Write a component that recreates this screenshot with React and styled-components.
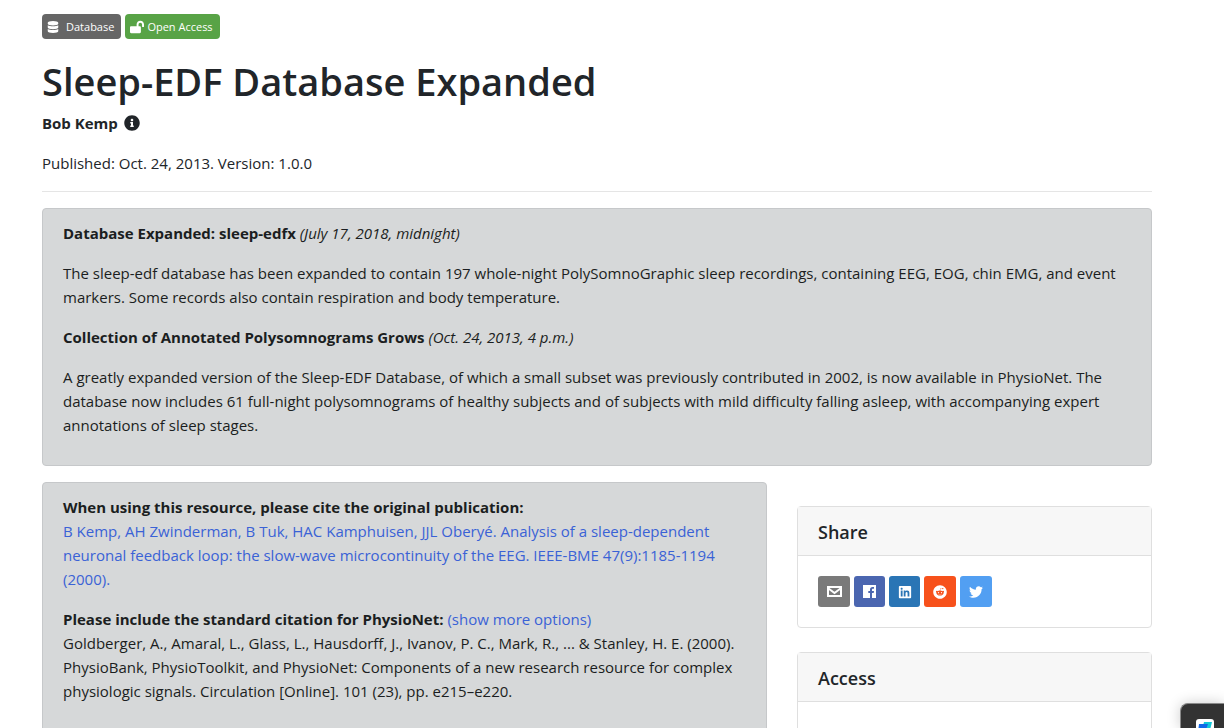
import React from "react";
import styled, { createGlobalStyle } from "styled-components";
import { FaDatabase, FaLockOpen, FaInfoCircle, FaLinkedin, FaReddit, FaTwitter } from "react-icons/fa";

const GlobalStyle = createGlobalStyle`
  *, *::before, *::after { box-sizing: border-box; }
  body {
    margin: 0;
    background: #fff;
    color: #212529;
    font-family: "Segoe UI", "Open Sans", "Noto Sans", sans-serif;
    font-size: 15px;
    line-height: 24px;
  }
`;

const Page = styled.main`
  padding: 14px 72px 24px 42px;
`;

const Badges = styled.div`
  display: flex;
  gap: 4px;
`;

const Badge = styled.span`
  display: inline-flex;
  align-items: center;
  gap: ${(p) => p.$gap};
  height: 25px;
  padding: 0 7px 0 5px;
  border-radius: 4px;
  background: ${(p) => p.$color};
  color: #fff;
  font-size: 11px;
`;

const Title = styled.h1`
  margin: 18px 0 6px;
  font-size: 38px;
  font-weight: 600;
  line-height: 48px;
`;

const Author = styled.p`
  display: flex;
  align-items: center;
  gap: 6px;
  margin: 0 0 16px;
`;

const InfoButton = styled.button`
  display: flex;
  padding: 0;
  border: 0;
  background: none;
  color: inherit;
  font-size: 16px;
`;

const Paragraph = styled.p`
  margin: 0 0 16px;
`;

const Rule = styled.hr`
  margin: 0 0 16px;
  border: 0;
  border-top: 1px solid #e5e5e5;
`;

const Notice = styled.section`
  margin-bottom: 16px;
  padding: 12px 20px;
  border: 1px solid #c6c8ca;
  border-radius: 4px;
  background: #d6d8d9;
  color: #1b1e21;
`;

const Columns = styled.div`
  display: grid;
  grid-template-columns: minmax(0, 725fr) minmax(0, 355fr);
  gap: 30px;
`;

const Sidebar = styled.aside`
  display: flex;
  flex-direction: column;
  gap: 24px;
  padding-top: 24px;
`;

const Card = styled.section`
  border: 1px solid #dfdfdf;
  border-radius: 4px;
  background: #fff;
`;

const CardTitle = styled.h2`
  margin: 0;
  padding: 13px 20px 11px;
  border-bottom: 1px solid #dfdfdf;
  background: #f7f7f7;
  font-size: 18px;
  font-weight: 600;
  line-height: 24px;
`;

const CardBody = styled.div`
  display: flex;
  gap: 4px;
  min-height: 71px;
  padding: 20px;
`;

const Link = styled.a`
  color: #3a62d6;
  text-decoration: none;
`;

const ShareLink = styled.a`
  display: flex;
  align-items: center;
  justify-content: center;
  width: ${(p) => (p.$narrow ? "31px" : "32px")};
  height: 31px;
  border-radius: 3px;
  background: ${(p) => p.$color};
  color: #fff;
  font-size: 14px;
`;

const Widget = styled.button`
  position: fixed;
  right: 0;
  bottom: 0;
  width: 44px;
  height: 25px;
  padding: 0;
  border: 1px solid #8a8a8a;
  border-width: 1px 0 0 1px;
  border-radius: 8px 0 0 0;
  background: #333;
  box-shadow: 0 0 14px rgba(0, 0, 0, 0.2);
  overflow: hidden;
`;

const WidgetLogo = styled.svg`
  display: block;
  margin: 15px 0 0 15px;
`;

function EnvelopeIcon() {
  return (
    <svg width="15" height="11" viewBox="0 0 15 11" fill="none" stroke="#fff" strokeWidth="2">
      <path d="M1 1h13v9H1z" />
      <path d="M1.500 2.500l6 4.500 6-4.500" />
    </svg>
  );
}

function FacebookIcon() {
  return (
    <svg width="13" height="13" viewBox="0 0 13 13" fill="#fff">
      <path d="M0 0h13v13H9V8h1.700l.3-2H9V4.800c0-.6.2-1 1-1h1V2.100A14 14 0 0 0 9.500 2C8 2 7 3 7 4.600V6H5.300v2H7v5H0z" />
    </svg>
  );
}

export default function App() {
  return (
    <>
      <GlobalStyle />
      <Page>
        <Badges>
          <Badge $color="#666" $gap="7px">
            <FaDatabase size={12} />
            Database
          </Badge>
          <Badge $color="#58a346" $gap="3px">
            <FaLockOpen size={14} />
            Open Access
          </Badge>
        </Badges>
        <Title>Sleep-EDF Database Expanded</Title>
        <Author>
          <strong>Bob Kemp</strong>
          <InfoButton type="button" aria-label="Author details">
            <FaInfoCircle />
          </InfoButton>
        </Author>
        <Paragraph>Published: Oct. 24, 2013. Version: 1.0.0</Paragraph>
        <Rule />
        <Notice>
          <Paragraph>
            <strong>Database Expanded: sleep-edfx</strong> <em>(July 17, 2018, midnight)</em>
          </Paragraph>
          <Paragraph>
            The sleep-edf database has been expanded to contain 197 whole-night PolySomnoGraphic sleep recordings,
            containing EEG, EOG, chin EMG, and event markers. Some records also contain respiration and body
            temperature.
          </Paragraph>
          <Paragraph>
            <strong>Collection of Annotated Polysomnograms Grows</strong> <em>(Oct. 24, 2013, 4 p.m.)</em>
          </Paragraph>
          <Paragraph>
            A greatly expanded version of the Sleep-EDF Database, of which a small subset was previously contributed in
            2002, is now available in PhysioNet. The database now includes 61 full-night polysomnograms of healthy
            subjects and of subjects with mild difficulty falling asleep, with accompanying expert annotations of sleep
            stages.
          </Paragraph>
        </Notice>
        <Columns>
          <Notice>
            <Paragraph>
              <strong>When using this resource, please cite the original publication:</strong>
              <br />
              <Link href="#publication">
                B Kemp, AH Zwinderman, B Tuk, HAC Kamphuisen, JJL Oberyé. Analysis of a sleep-dependent neuronal
                feedback loop: the slow-wave microcontinuity of the EEG. IEEE-BME 47(9):1185-1194 (2000).
              </Link>
            </Paragraph>
            <Paragraph>
              <strong>Please include the standard citation for PhysioNet:</strong>{" "}
              <Link href="#citations">(show more options)</Link>
              <br />
              Goldberger, A., Amaral, L., Glass, L., Hausdorff, J., Ivanov, P. C., Mark, R., ... &amp; Stanley, H. E.
              (2000). PhysioBank, PhysioToolkit, and PhysioNet: Components of a new research resource for complex
              physiologic signals. Circulation [Online]. 101 (23), pp. e215–e220.
            </Paragraph>
          </Notice>
          <Sidebar>
            <Card>
              <CardTitle>Share</CardTitle>
              <CardBody>
                <ShareLink href="#email" aria-label="Email" $color="#7a7a7a">
                  <EnvelopeIcon />
                </ShareLink>
                <ShareLink href="#facebook" aria-label="Facebook" $color="#4b66b0" $narrow>
                  <FacebookIcon />
                </ShareLink>
                <ShareLink href="#linkedin" aria-label="LinkedIn" $color="#2a75b5" $narrow>
                  <FaLinkedin />
                </ShareLink>
                <ShareLink href="#reddit" aria-label="Reddit" $color="#f7511b">
                  <FaReddit />
                </ShareLink>
                <ShareLink href="#twitter" aria-label="Twitter" $color="#529ff2">
                  <FaTwitter />
                </ShareLink>
              </CardBody>
            </Card>
            <Card>
              <CardTitle>Access</CardTitle>
              <CardBody />
            </Card>
          </Sidebar>
        </Columns>
      </Page>
      <Widget type="button" aria-label="Open assistant">
        <WidgetLogo width="18" height="18" viewBox="0 0 18 18">
          <rect width="18" height="18" rx="3" fill="#fff" />
          <path d="M8 3h8l-2 8H6z" fill="#12c8d8" />
          <path d="M3 5h9l-3 8H2z" fill="#1268e8" />
        </WidgetLogo>
      </Widget>
    </>
  );
}
